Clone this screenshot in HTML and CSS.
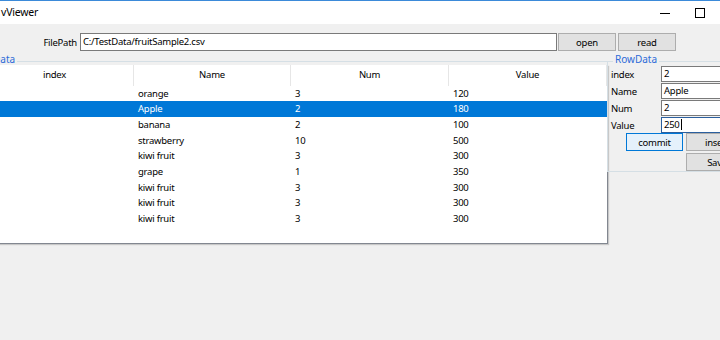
FILE: index.html
```html
<!DOCTYPE html>
<html>
<head>
<meta charset="utf-8">
<link rel="stylesheet" href="styles.css">
</head>
<body>
<div class="window">
  <div class="titlebar">
    <span class="title">vViewer</span>
    <div class="controls">
      <span class="ctl"><svg width="10" height="10" viewBox="0 0 10 10"><line x1="0" y1="5.5" x2="10" y2="5.5" stroke="#000" stroke-width="1"/></svg></span>
      <span class="ctl"><svg width="10" height="10" viewBox="0 0 10 10"><rect x="0.5" y="0.5" width="9" height="9" fill="none" stroke="#000" stroke-width="1"/></svg></span>
    </div>
  </div>
  <div class="content">
    <div class="pathrow">
      <span class="pathlabel">FilePath</span>
      <div class="textbox pathbox">C:/TestData/fruitSample2.csv</div>
      <button class="btn openbtn">open</button>
      <button class="btn">read</button>
    </div>
    <div class="main">
      <div class="group datagroup">
        <div class="legend datalegend">Data</div>
        <div class="grid">
          <div class="row head">
            <div class="cell">index</div><div class="cell">Name</div><div class="cell">Num</div><div class="cell">Value</div>
          </div>
          <div class="row"><div class="cell"></div><div class="cell">orange</div><div class="cell">3</div><div class="cell">120</div></div>
          <div class="row sel"><div class="cell"></div><div class="cell">Apple</div><div class="cell">2</div><div class="cell">180</div></div>
          <div class="row"><div class="cell"></div><div class="cell">banana</div><div class="cell">2</div><div class="cell">100</div></div>
          <div class="row"><div class="cell"></div><div class="cell">strawberry</div><div class="cell">10</div><div class="cell">500</div></div>
          <div class="row"><div class="cell"></div><div class="cell">kiwi fruit</div><div class="cell">3</div><div class="cell">300</div></div>
          <div class="row"><div class="cell"></div><div class="cell">grape</div><div class="cell">1</div><div class="cell">350</div></div>
          <div class="row"><div class="cell"></div><div class="cell">kiwi fruit</div><div class="cell">3</div><div class="cell">300</div></div>
          <div class="row"><div class="cell"></div><div class="cell">kiwi fruit</div><div class="cell">3</div><div class="cell">300</div></div>
          <div class="row"><div class="cell"></div><div class="cell">kiwi fruit</div><div class="cell">3</div><div class="cell">300</div></div>
        </div>
      </div>
      <div class="group rowgroup">
        <div class="legend rowlegend">RowData</div>
        <div class="form">
          <div class="field"><span class="flabel">index</span><div class="textbox fbox">2</div></div>
          <div class="field"><span class="flabel">Name</span><div class="textbox fbox">Apple</div></div>
          <div class="field"><span class="flabel">Num</span><div class="textbox fbox">2</div></div>
          <div class="field"><span class="flabel">Value</span><div class="textbox fbox focus">250<span class="caret"></span></div></div>
        </div>
        <div class="actions">
          <button class="btn commit">commit</button>
          <div class="actcol">
            <button class="btn wide">insert</button>
            <button class="btn wide">Save</button>
          </div>
        </div>
      </div>
    </div>
  </div>
</div>
</body>
</html>
```

FILE: styles.css
```css
* { box-sizing: border-box; }
html, body { margin: 0; padding: 0; }
body {
  width: 720px;
  height: 340px;
  overflow: hidden;
  background: #f0f0f0;
  font-family: "Noto Sans", "Open Sans", sans-serif;
  font-size: 9.5px;
  letter-spacing: -0.25px;
  color: #000;
}
.window { width: 720px; height: 340px; overflow: hidden; }
.titlebar {
  height: 24px;
  background: #fff;
  border-top: 1px solid #3b8ad9;
  display: flex;
  align-items: center;
  justify-content: space-between;
}
.title { font-size: 10.5px; letter-spacing: -0.2px; margin-top: -1px; padding-left: 1px; }
.controls { display: flex; align-items: center; padding-right: 3px; }
.ctl { width: 35px; height: 22px; display: flex; align-items: center; justify-content: center; }
.ctl svg { display: block; }
.content { padding-top: 9px; }
.pathrow { display: flex; align-items: center; height: 18px; }
.pathlabel { width: 78px; text-align: right; padding-right: 1px; }
.textbox {
  background: #fff;
  border: 1px solid #7a7a7a;
  line-height: 14px;
  padding: 0 2px;
  white-space: nowrap;
  overflow: hidden;
}
.pathbox { margin-left: 2px; width: 477px; height: 18px; line-height: 16px; }
.btn {
  font: inherit;
  letter-spacing: inherit;
  background: #e1e1e1;
  border: 1px solid #adadad;
  padding: 0;
  height: 18px;
  width: 58px;
  color: #000;
}
.openbtn { margin-left: 1px; margin-right: 2px; }
.main { display: flex; margin-top: 8px; }
.group { position: relative; }
.datagroup { width: 609px; padding-top: 3px; border-top: 1px solid #d5dfe5; margin-top: 2px; }
.legend { color: #2d6bd8; line-height: 12px; font-size: 10px; letter-spacing: 0; }
.datalegend { position: absolute; top: -9px; left: -9px; background: #f0f0f0; padding: 0 2px; }
.rowlegend { position: absolute; top: -9px; left: 5px; background: #f0f0f0; padding: 0 2px; }
.rowgroup {
  margin-top: 2px;
  flex: 1;
  border-left: 1px solid #d5dfe5;
  border-top: 1px solid #d5dfe5;
  border-bottom: 1px solid #d5dfe5;
  height: 111px;
  padding: 4px 0 0 3px;
  margin-left: -1px;
}
.grid {
  margin-left: -24px;
  width: 632px;
  height: 179px;
  background: #fff;
  border-right: 1px solid #828790;
  border-bottom: 1px solid #828790;
  box-shadow: 1px 1px 1px #c8c8c8;
}
.row { display: grid; grid-template-columns: 158px 157px 158px 158px; height: 15.7px; line-height: 15.7px; }
.row .cell { padding-left: 4px; white-space: nowrap; }
.row.head { height: 20.5px; line-height: 20px; }
.row.head .cell { text-align: center; padding: 0; border-right: 1px solid #e6e6e6; }
.row.sel { background: #0078d7; color: #fff; }
.form { display: flex; flex-direction: column; gap: 1px; }
.field { display: flex; align-items: center; height: 16px; }
.flabel { width: 50px; }
.fbox { width: 70px; height: 16px; line-height: 14px; }
.fbox.focus { border-color: #2b5f9e; }
.caret { display: inline-block; width: 1px; height: 11px; background: #000; vertical-align: -2px; margin-left: 1px; }
.actions { display: flex; margin-top: 0; padding-left: 15px; gap: 3px; }
.commit { background: #e5f1fb; border-color: #0078d7; width: 57px; }
.actcol { display: flex; flex-direction: column; gap: 2px; }
.wide { width: 62px; height: 18px; }
```
